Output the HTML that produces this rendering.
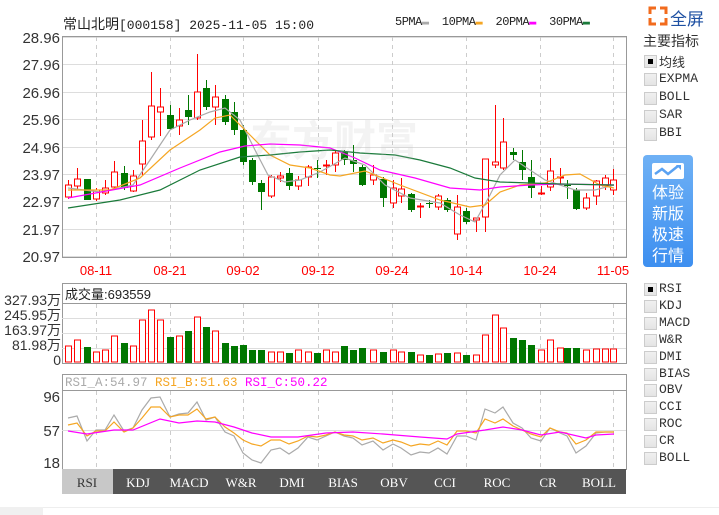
<!DOCTYPE html><html><head><meta charset="utf-8"><style>
body{margin:0;width:719px;height:515px;background:#fff;position:relative;overflow:hidden;font-family:"Liberation Sans","Noto Sans CJK SC",sans-serif}
.a{position:absolute;white-space:nowrap}
.m{font-family:"Liberation Mono","Noto Sans CJK SC",monospace}
.cb{position:absolute;left:644px;width:11px;height:11px;border:1px solid #ccc;background:linear-gradient(#f0f0f0,#e4e4e4)}
.cb.on:after{content:"";position:absolute;left:3px;top:3px;width:5px;height:5px;background:#000}
.lb{position:absolute;left:659px;font-family:"Liberation Mono",monospace;font-size:13px;color:#333}
</style></head><body>
<div class="a" style="left:63px;top:14px;font-size:14px;color:#222">常山北明<span class="m" style="font-size:13px">[000158] 2025-11-05 15:00</span></div>
<div class="a m" style="left:395px;top:15px;font-size:12px;color:#222;letter-spacing:-0.5px">5PMA<span style="color:#aaa">▬</span> &nbsp;10PMA<span style="color:#f5a623">▬</span> &nbsp;20PMA<span style="color:#f0f">▬</span> &nbsp;30PMA<span style="color:#1a7a3a">▬</span></div>
<svg class="a" style="left:648px;top:6px" width="20" height="20"><g stroke="#f26b1d" stroke-width="3" fill="none"><path d="M2 8V2h6M12 2h6v6M18 12v6h-6M8 18H2v-6"/></g></svg>
<div class="a" style="left:670px;top:5px;font-size:17px;color:#1e50a2">全屏</div>
<div class="a" style="left:643px;top:31px;font-size:14px;color:#333">主要指标</div>
<div class="cb on" style="top:55px"></div><div class="lb" style="top:52px;font-family:'Liberation Sans','Noto Sans CJK SC',sans-serif">均线</div>
<div class="cb" style="top:73px"></div><div class="lb" style="top:71px">EXPMA</div>
<div class="cb" style="top:92px"></div><div class="lb" style="top:89px">BOLL</div>
<div class="cb" style="top:110px"></div><div class="lb" style="top:107px">SAR</div>
<div class="cb" style="top:128px"></div><div class="lb" style="top:125px">BBI</div>
<div class="a" style="left:643px;top:155px;width:50px;height:112px;background:linear-gradient(#6fb1f5,#3d8ff0);border-radius:4px;color:#fff;font-size:16px;line-height:21px;text-align:center">
<svg width="34" height="18" style="margin-top:7px"><rect x="1" y="1" width="32" height="16" rx="2" fill="#fff"/><path d="M4 12l7-5 6 5 10-8" stroke="#5aa2f2" stroke-width="2.5" fill="none"/><path d="M25 3h5v5z" fill="#5aa2f2"/></svg><div style="margin-top:-3px">体验<br>新版<br>极速<br>行情</div></div>
<div id="lst"></div>
<svg class="a" style="left:0;top:0" width="719" height="515" id="s"></svg>
<div class="a" style="left:250px;top:108px;font-size:42px;font-weight:bold;color:rgba(190,190,190,0.18)">东方财富</div>
<script>
var s=document.getElementById('s'),h='';
function T(x,y,t,c,sz,an){h+='<text x="'+x+'" y="'+y+'" fill="'+c+'" font-size="'+sz+'" text-anchor="'+(an||'start')+'" font-family="Liberation Sans,Noto Sans CJK SC,sans-serif">'+t+'</text>';}
function L(x1,y1,x2,y2,c,d){h+='<line x1="'+x1+'" y1="'+y1+'" x2="'+x2+'" y2="'+y2+'" stroke="'+c+'" '+(d?'stroke-dasharray="4,4"':'')+'/>';}
function P(p,c){h+='<polyline fill="none" stroke="'+c+'" stroke-width="1.2" points="'+p+'"/>';}
var gx=[96,170,243,318,392,466,540,613];
var gy=[37,64,92,119,147,174,201,229,256],pl=['28.96','27.96','26.96','25.96','24.96','23.97','22.97','21.97','20.97'];
gy.forEach(function(y,i){L(62,y+.5,626,y+.5,'#ddd');T(60,y+6,pl[i],'#333',15,'end')});
gx.forEach(function(x){L(x+.5,37,x+.5,257,'#ccc',1)});
h+='<rect x="62.5" y="36.5" width="564" height="221" fill="none" stroke="#999"/>';
var dl=['08-11','08-21','09-02','09-12','09-24','10-14','10-24','11-05'];
gx.forEach(function(x,i){T(x,275,dl[i],'#f00',13,'middle')});
var C=[[68,'r',185,197,180,199],[77,'r',179,186,168,190],[87,'g',179,200,179,200],[96,'r',190,199,188,201],[105,'r',188,193,180,195],[114,'r',172,187,161,190],[124,'g',173,188,166,190],[133,'r',176,191,170,192],[142,'r',141,164,120,175],[151,'r',106,137,72,140],[160,'r',107,112,88,136],[170,'g',115,129,105,130],[179,'r',120,126,108,135],[188,'g',110,117,95,125],[197,'r',92,118,54,120],[206,'g',88,107,80,110],[215,'r',97,107,85,125],[225,'g',99,122,95,125],[234,'g',112,130,102,135],[243,'g',130,162,125,165],[252,'g',160,182,158,185],[261,'g',183,192,180,210],[271,'r',177,196,175,198],[280,'r',176,178,172,182],[289,'g',173,186,168,190],[298,'r',180,186,176,190],[308,'r',167,177,165,186],[317,'g',168,169,160,178],[326,'r',165,166,160,175],[335,'r',153,165,150,172],[344,'g',152,160,150,165],[353,'g',160,164,145,172],[362,'g',167,185,165,186],[373,'r',175,180,165,185],[383,'g',179,198,177,207],[393,'r',188,203,180,208],[401,'r',189,196,178,203],[411,'g',194,210,193,212],[420,'r',206,207,203,218],[429,'g',203,204,200,208],[438,'r',196,207,194,210],[447,'g',200,210,198,212],[457,'r',207,234,195,240],[466,'g',211,222,208,224],[476,'r',218,220,218,232],[485,'r',159,217,159,232],[495,'r',162,165,105,168],[503,'r',142,168,118,170],[513,'g',152,155,148,160],[522,'g',162,170,150,180],[531,'g',177,188,160,198],[541,'r',193,194,186,195],[550,'r',171,187,158,191],[560,'r',177,178,168,184],[567,'g',185,186,180,199],[576,'g',190,209,188,210],[586,'r',198,208,193,210],[596,'r',181,196,180,205],[605,'r',178,186,175,190],[613,'r',180,190,169,195]];
C.forEach(function(c){var col=c[1]=='r'?'#f00':'#070';L(c[0]+.5,c[4],c[0]+.5,c[2],col);L(c[0]+.5,c[3],c[0]+.5,c[5],col);
 if(c[1]=='r')h+='<rect x="'+(c[0]-2.5)+'" y="'+c[2]+'" width="6" height="'+Math.max(1,c[3]-c[2])+'" fill="#fff" stroke="#f00"/>';
 else h+='<rect x="'+(c[0]-3)+'" y="'+c[2]+'" width="7" height="'+Math.max(1,c[3]-c[2])+'" fill="#070"/>';});
P('68,188 100,192 133,185 150,160 170,130 190,120 210,112 225,108 240,120 255,150 268,175 285,182 300,180 320,172 345,158 365,165 385,185 410,198 440,203 460,215 475,222 490,195 500,175 515,160 530,170 545,180 560,185 575,190 595,190 614,185','#aaa');
P('68,190 110,190 140,178 170,150 200,130 215,118 230,115 250,135 270,155 290,165 310,168 330,175 340,176 365,171 400,185 440,200 470,207 485,205 500,192 520,185 545,183 565,175 580,174 600,185 614,188','#f5a623');
P('68,198 140,185 180,168 220,152 245,146 270,144 300,145 330,148 355,158 380,170 415,178 450,188 480,190 500,187 530,185 560,184 614,185','#f0f');
P('68,208 120,200 160,190 200,170 240,157 270,155 300,152 330,150 360,153 395,155 420,160 450,168 475,178 500,182 530,183 560,184 614,185','#1a7a3a');
h+='<rect x="62.5" y="283.5" width="564" height="80" fill="#fff" stroke="#999"/>';L(62,303.5,626,303.5,'#999');
[318,333,348].forEach(function(y){L(62,y+.5,626,y+.5,'#ddd')});
gx.forEach(function(x){L(x+.5,304,x+.5,362,'#ccc',1)});
T(65,299,'成交量:693559','#222',13);
var vl=[['327.93万',305],['245.95万',320],['163.97万',335],['81.98万',350],['0',365]];
vl.forEach(function(v){T(61,v[1],v[0],'#333',14,'end')});
var V=[346,340,347,352,350,336,343,346,320,310,320,337,336,331,317,327,331,343,346,345,350,350,352,352,353,350,352,353,350,352,346,350,348,350,352,350,352,352,355,355,354,353,353,355,355,335,315,328,338,340,345,350,340,348,348,348,350,349,349,349];
C.forEach(function(c,i){var y=V[i];if(c[1]=='r')h+='<rect x="'+(c[0]-2.5)+'" y="'+y+'" width="6" height="'+(362-y)+'" fill="#fff" stroke="#f00"/>';else h+='<rect x="'+(c[0]-3)+'" y="'+y+'" width="7" height="'+(363-y)+'" fill="#070"/>';});
h+='<rect x="62.5" y="374.5" width="564" height="95" fill="#fff" stroke="#999"/>';L(62,390.5,626,390.5,'#999');
L(62,430.5,626,430.5,'#ddd');gx.forEach(function(x){L(x+.5,391,x+.5,468,'#ccc',1)});
h+='<text x="65" y="386" font-size="12.5" font-family="Liberation Mono,monospace"><tspan fill="#aaa">RSI_A:54.97 </tspan><tspan fill="#f5a623">RSI_B:51.63 </tspan><tspan fill="#f0f">RSI_C:50.22</tspan></text>';
T(60,402,'96','#333',15,'end');T(60,436,'57','#333',15,'end');T(60,468,'18','#333',15,'end');
P('68,418 77,416 87,441 96,430 105,430 114,415 124,431 133,428 142,410 151,398 160,397 170,417 179,414 188,413 197,402 206,420 215,417 225,432 234,436 243,453 252,460 261,463 271,450 280,448 289,454 298,448 308,437 317,440 326,436 335,432 344,436 353,438 362,445 373,441 383,450 393,444 401,448 411,455 420,452 429,453 438,448 447,454 457,436 466,436 476,440 485,409 495,413 503,407 513,423 522,428 531,438 541,441 550,428 560,433 567,436 576,453 586,446 596,433 605,432 614,432','#aaa');
P('68,425 77,423 87,436 96,431 105,431 114,422 124,432 133,428 142,418 151,407 160,407 170,417 179,415 188,415 197,409 206,419 215,417 225,427 234,433 243,440 252,444 261,446 271,440 280,440 289,444 298,441 308,436 317,437 326,435 335,432 344,435 353,436 362,440 373,438 383,443 393,440 401,442 411,446 420,444 429,445 438,441 447,445 457,431 466,431 476,433 485,419 495,423 503,419 513,426 522,430 531,434 541,437 550,428 560,432 567,433 576,444 586,440 596,432 605,432 614,432','#f5a623');
P('68,431 87,434 114,430 133,430 160,419 179,423 197,421 215,422 234,427 252,433 271,437 298,437 326,433 353,432 383,434 420,437 447,439 457,434 485,430 503,427 522,430 541,435 560,432 586,438 596,435 614,434','#f0f');
h+='<rect x="62" y="469" width="564" height="25" fill="#555"/><rect x="62" y="469" width="51" height="25" fill="#c8c8c8"/>';
var tb=[['RSI',87],['KDJ',138],['MACD',189],['W&amp;R',241],['DMI',292],['BIAS',343],['OBV',394],['CCI',445],['ROC',497],['CR',548],['BOLL',599]];
tb.forEach(function(t,i){h+='<text x="'+t[1]+'" y="487" font-size="13" text-anchor="middle" fill="'+(i?'#fff':'#333')+'" font-family="Liberation Serif,serif">'+t[0]+'</text>'});
h+='<rect x="0" y="507" width="43" height="8" fill="#f0f0f0"/><line x1="43" y1="507.5" x2="719" y2="507.5" stroke="#eee"/>';
s.innerHTML=h;
var ls=['RSI','KDJ','MACD','W&amp;R','DMI','BIAS','OBV','CCI','ROC','CR','BOLL'],o='';
ls.forEach(function(t,i){var y=283+i*16.9;o+='<div class="cb'+(i?'':' on')+'" style="top:'+y+'px"></div><div class="lb" style="top:'+(y-2)+'px">'+t+'</div>'});
document.getElementById('lst').innerHTML=o;
</script></body></html>
